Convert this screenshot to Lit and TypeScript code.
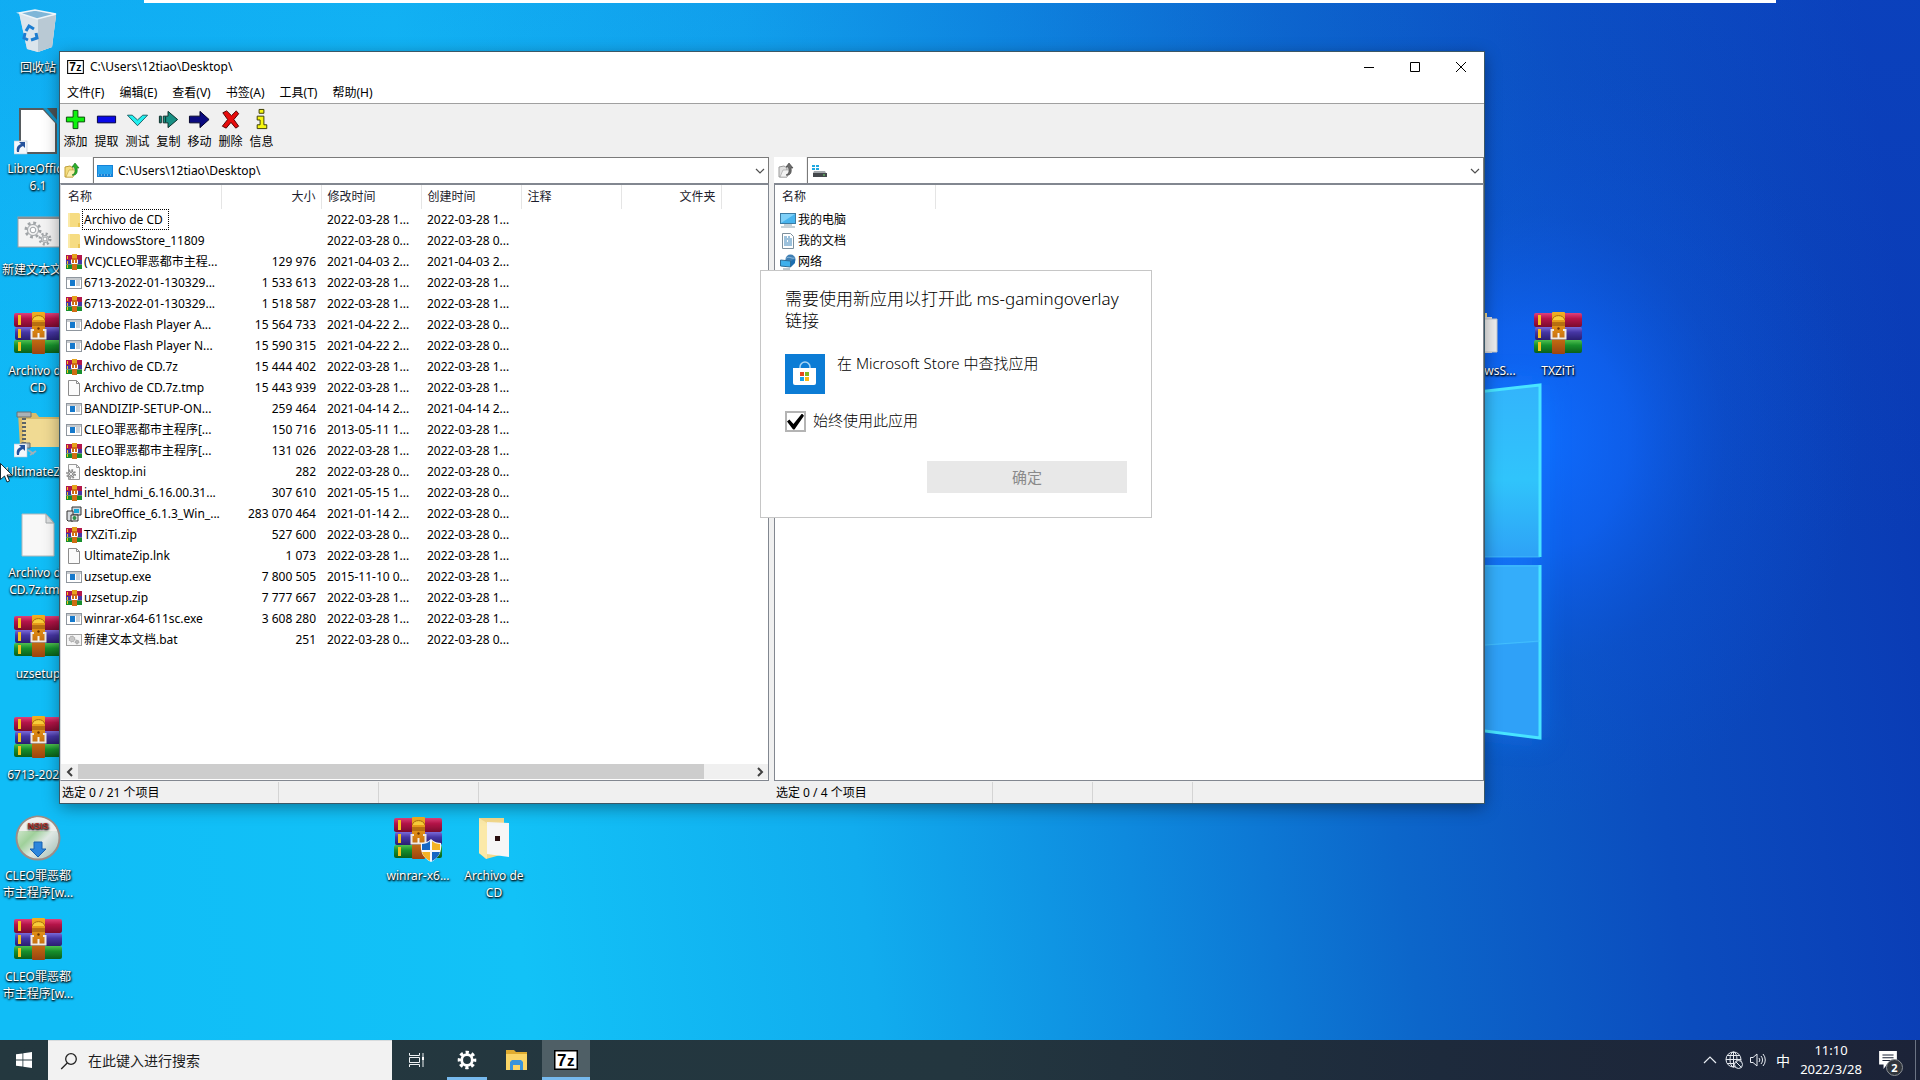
import { LitElement, html, svg, css, nothing } from "lit";
import { customElement, property } from "lit/decorators.js";
import { classMap } from "lit/directives/class-map.js";

type IconName =
  | "bin" | "doc" | "bat" | "rar" | "rarShield" | "zipFolder" | "page" | "nsis" | "openFolder" | "paperFolder"
  | "folder" | "rarSmall" | "exe" | "ini" | "msi" | "batSmall" | "pageSmall" | "pc" | "docs" | "network"
  | "add" | "extract" | "test" | "copy" | "move" | "delete" | "info"
  | "up" | "upGrey" | "screen" | "drive" | "sevenZip" | "store"
  | "start" | "search" | "taskView" | "gear" | "explorer" | "chevronUp" | "globe" | "speaker" | "notes"
  | "min" | "max" | "close" | "chevron" | "left" | "right" | "cursor";

const cog = (cx: number, cy: number, r: number, w: number, color: string) => svg`
  <circle cx=${cx} cy=${cy} r=${r} fill="none" stroke=${color} stroke-width=${w} stroke-dasharray="${r * 0.39} ${r * 0.395}"/>
  <circle cx=${cx} cy=${cy} r=${r - w / 2} fill="#f2f2f2" stroke=${color} stroke-width="1"/>
  <circle cx=${cx} cy=${cy} r=${r * 0.4} fill="#fff" stroke=${color} stroke-width="1"/>`;

const books = svg`
  <defs>
    <linearGradient id="r" x2="0" y2="1"><stop stop-color="#e0407a"/><stop offset=".4" stop-color="#b41448"/><stop offset="1" stop-color="#7a0b2e"/></linearGradient>
    <linearGradient id="b" x2="0" y2="1"><stop stop-color="#7a6ad8"/><stop offset=".4" stop-color="#4636a4"/><stop offset="1" stop-color="#2a1e70"/></linearGradient>
    <linearGradient id="g" x2="0" y2="1"><stop stop-color="#4fc04f"/><stop offset=".4" stop-color="#17902c"/><stop offset="1" stop-color="#0a5f1a"/></linearGradient>
    <linearGradient id="o" x2="0" y2="1"><stop stop-color="#f2b020"/><stop offset=".45" stop-color="#d98412"/><stop offset="1" stop-color="#9c4310"/></linearGradient>
  </defs>
  <rect x="0" y="4" width="48" height="14" rx="2" fill="url(#r)"/>
  <rect x="1" y="18" width="47" height="13" rx="2" fill="url(#b)"/>
  <rect x="0" y="31" width="48" height="13" rx="2" fill="url(#g)"/>
  <path d="M4 6h3v10h-3zM4 20h3v9h-3zM4 33h3v9h-3z" fill="#f7c21c"/>
  <rect x="18" y="3" width="13" height="42" rx="1" fill="url(#o)"/>
  <path d="M18 11a7 7 0 0 1 13 0" fill="#f8cd3a" stroke="#a86a0c" stroke-width="1"/>
  <path d="M18 14h13M18 16h13" stroke="#8c4a0a" stroke-width="1"/>
  <path d="M18 30h13" stroke="#6b3408" stroke-width="2"/>
  <path d="M20 21h-2.500v8.500h14v-8.500h-2.500" fill="none" stroke="#ece8e4" stroke-width="2"/>
  <path d="M24.500 24v5" stroke="#f5f2ee" stroke-width="2"/>
  <circle cx="24.500" cy="19.500" r="1.200" fill="#6b3408"/>`;

const shortcut = svg`<rect x="0" y="34" width="13" height="13" fill="#f4f8fc" stroke="#b8c4d0" stroke-width=".6"/>
  <path d="M3 45c-1-5 1-7 4-8l-2-2h6v6l-2-2c-3 1-4 3-4 6z" fill="#25529c"/>`;

const exeBox = svg`<rect x=".5" y="2.500" width="15" height="11" fill="#fff" stroke="#8f969e"/>
  <path d="M1 4h14" stroke="#8f969e"/><rect x="4" y="5" width="5" height="6" fill="#1579cc"/>
  <path d="M10 6h4M10 8h4M10 10h4" stroke="#9aa4ae"/>`;

const ICONS: Record<IconName, [string, unknown]> = {
  bin: ["0 0 48 48", svg`
    <path d="M5 6l30 0 7 3-4 32-14 5-11-3z" fill="#c7d9e4"/>
    <path d="M5 7l18 5 19-3-4 32-14 5-11-3z" fill="#dbe5ec"/><path d="M24 12l18-3-4 32-14 5z" fill="#b9c9d4"/>
    <path d="M5 7l16-3 21 4-19 5z" fill="#7fb6d8" stroke="#eef5f9" stroke-width="1.500"/>
    <g fill="none" stroke="#1d7dd0" stroke-width="3"><path d="M12 25l3-5 5 3"/><path d="M22 27l1 5-6 2"/><path d="M14 34l-4-2 1-5"/></g>`],
  doc: ["0 0 48 48", svg`<path d="M5 1h38v46h-38z" fill="#565b5e"/><path d="M7 3h22l12 13v29h-34z" fill="#fff"/>
    <path d="M32 1h11v13z" fill="#4c5154"/><path d="M29 1h4l10 12v4z" fill="#1495c8"/>${shortcut}`],
  bat: ["0 0 48 48", svg`<rect x="4" y="9" width="42" height="30" fill="#f3f3f3" stroke="#9a9fa3"/><path d="M4 10h42" stroke="#8c9296" stroke-width="2"/>
    ${cog(19, 22, 7, 3, "#a0a4a7")}${cog(31, 31, 5, 3, "#a0a4a7")}`],
  rar: ["0 0 48 48", books],
  rarShield: ["0 0 48 48", svg`${books}
    <path d="M37 25c3 3 7 4 10 4 1 9-2 15-10 19-8-4-11-10-10-19 3 0 7-1 10-4z" fill="#f7f9fb"/>
    <path d="M36 27v9h-8v-6c3 0 6-1 8-3zM38 38h8c-1 4-4 7-8 9z" fill="#1667c4"/>
    <path d="M38 27v9h8v-6c-3 0-6-1-8-3zM36 38h-8c1 4 4 7 8 9z" fill="#f5b324"/>`],
  zipFolder: ["0 0 48 48", svg`<path d="M4 3h18l3 4h23v30h-42z" fill="#d9bb6a"/><path d="M8 9h40v28h-38z" fill="#f0da93"/>
    <path d="M10 4v30" stroke="#5c6468" stroke-width="4" stroke-dasharray="2 2"/><path d="M3 2h14v5h-14zM7 33h9v5h-9z" fill="#aab2b6" stroke="#697175"/>${shortcut}
    <path d="M14 40l6 4M16 45l6-4" stroke="#9fb0b8" stroke-width="2"/>`],
  page: ["0 0 48 48", svg`<path d="M8 3h24l8 9v33h-32z" fill="#f8f8f8" stroke="#b4b8ba"/><path d="M32 3v9h8z" fill="#dcdfe0" stroke="#a4a8aa"/>`],
  nsis: ["0 0 48 48", svg`<defs><linearGradient id="n" x2="1" y2="1"><stop stop-color="#f4f6f2"/><stop offset=".4" stop-color="#9fd09a"/><stop offset=".6" stop-color="#dfe8e4"/><stop offset="1" stop-color="#9ab8ae"/></linearGradient></defs>
    <circle cx="24" cy="24" r="21.500" fill="url(#n)" stroke="#9b8d88" stroke-width="2"/><path d="M5 17a20 20 0 0 1 38 0z" fill="#efefec"/>
    <text x="24" y="15" text-anchor="middle" font-family="Liberation Sans" font-size="9" font-weight="bold" fill="#b03028">NSIS</text>
    <path d="M20 28h8v7h4l-8 8-8-8h4z" fill="#2b86dd" stroke="#1660ae"/>`],
  openFolder: ["0 0 48 48", svg`<path d="M9 4h25v36l-18 5-7-6z" fill="#f3d98c"/><path d="M17 8l22 1v34l-22-3z" fill="#f6f6f6"/><path d="M9 4l8 5v36l-8-6z" fill="#fbe9a8"/>
    <rect x="25" y="22" width="5" height="5" fill="#2a1010"/>`],
  paperFolder: ["0 0 48 48", svg`<path d="M9 4h20v36h-20z" fill="#f3d98c"/><path d="M16 8h18v36h-18z" fill="#dcdcdc"/><path d="M24 10h15v33h-15z" fill="#f0f0f0" stroke="#c8c8c8"/>`],
  folder: ["0 0 16 16", svg`<path d="M2 1h11l1 1v13h-12z" fill="#f6dc82"/><path d="M2 1h2v14h-2z" fill="#fbeaa8"/><path d="M12 11h2v4h-2z" fill="#eac452"/>`],
  rarSmall: ["0 0 16 16", svg`<path d="M0 1h16v5H0z" fill="#b3174b"/><path d="M0 6h16v4.500H0z" fill="#4636a4"/><path d="M0 10.500h16V15H0z" fill="#178f2d"/>
    <path d="M1 2h1v3h-1zM1 7h1v3h-1zM1 11h1v3h-1z" fill="#f7c21c"/><path d="M6 0h5v16h-5z" fill="#cf6d14"/><path d="M6 0h5v4h-5z" fill="#e6a11c"/>
    <path d="M5.500 5.500v4h6v-4M8.500 6v3" fill="none" stroke="#fff"/>`],
  exe: ["0 0 16 16", exeBox],
  ini: ["0 0 16 16", svg`<path d="M2.500.5h8l3 3v12h-11z" fill="#fbfbfb" stroke="#9a9a9a"/><path d="M10.500.5v3h3" fill="none" stroke="#9a9a9a"/>${cog(5, 10, 4, 2, "#8b8b8b")}`],
  msi: ["0 0 16 16", svg`<path d="M6 1h9v8h-9z" fill="#cfd6dc" stroke="#333"/><path d="M8 3h5v4h-5z" fill="#19a8d8"/><path d="M1 5h6v10h-5l-1-1z" fill="#d8dce0" stroke="#333"/>
    <path d="M5 9h7v6h-7z" fill="#e8e8e8" stroke="#333"/><circle cx="8.500" cy="12" r="2" fill="#2c8f4a"/>`],
  batSmall: ["0 0 16 16", svg`<rect x=".5" y="2.500" width="15" height="11" fill="#f6f6f6" stroke="#a0a0a0"/>${cog(6, 7, 3, 1, "#a8a8a8")}${cog(11, 10, 2, 1, "#a8a8a8")}`],
  pageSmall: ["0 0 16 16", svg`<path d="M2.500.5h8l3 3v12h-11z" fill="#fbfbfb" stroke="#8c8c8c"/><path d="M10.500.5v3h3" fill="none" stroke="#8c8c8c"/>`],
  pc: ["0 0 16 16", svg`<rect x=".5" y="1.500" width="15" height="10" fill="#48b4ee" stroke="#3c7ca4"/><path d="M1 2h14l-14 9z" fill="#7fd0f8"/><path d="M4 13h8M1 15h14" stroke="#8ea4b0"/>`],
  docs: ["0 0 16 16", svg`<path d="M2.500.5h8l3 3v12h-11z" fill="#fff" stroke="#7d8f9c"/><path d="M4 4h3M8 4h2M4 6h8M4 8h3M8 8h4M4 10h8M4 12h8" stroke="#3b83b8"/>`],
  network: ["0 0 16 16", svg`<circle cx="10.500" cy="5.500" r="5" fill="#3f7fb4"/><path d="M6.500 4c3-2 5 1 8 0M7 8c3-1 5 1 8 0" stroke="#9cc4e0" fill="none"/><path d="M.5 6l10 1v6l-10-1z" fill="#3fb0ec" stroke="#2d6d98"/><path d="M11 7l4-2v4l-4 4z" fill="#1d6fb0"/><path d="M3 15h7" stroke="#7c909c"/>`],
  add: ["0 0 24 24", svg`<path d="M9.500 2.500h5v7h7v5h-7v7h-5v-7h-7v-5h7z" fill="#0ef20e" stroke="#0a4a0a"/>`],
  extract: ["0 0 24 24", svg`<path d="M2.500 8.500h19v7h-19z" fill="#0808e8" stroke="#00003c"/>`],
  test: ["0 0 24 24", svg`<path d="M1.500 7.500h5l5.500 5 5.500-5h5l-10.500 11z" fill="#20f0f0" stroke="#1c6064"/>`],
  copy: ["0 0 24 24", svg`<path d="M2.500 8.500h2v7h-2zM6.500 8.500h5v-5l10 8.500-10 8.500v-5h-5z" fill="#189084" stroke="#082c28"/><path d="M9 9v6" stroke="#082c28"/>`],
  move: ["0 0 24 24", svg`<path d="M1.500 8.500h11v-5l9.500 8.500-9.500 8.500v-5h-11z" fill="#0a0a80" stroke="#000028"/>`],
  delete: ["0 0 24 24", svg`<path d="M4 5l4-2 5 5 5-5 2.500 3-5 6 5 7-3 2-5-6-5 6-4-2 5.500-7z" fill="#e80c0c" stroke="#500000"/>`],
  info: ["0 0 24 24", svg`<path d="M9.500 1.500h5v4h-5zM7.500 8.500h7v9h3v4h-10v-4h3v-5h-3z" fill="#f6f610" stroke="#383800"/>`],
  up: ["0 0 16 16", svg`<path d="M1 5l5-1 3 2v9l-8 0z" fill="#f4dc7c" stroke="#bf9f38"/><path d="M2 15l3-7h7l-3 7z" fill="#fbeeae" stroke="#bf9f38" stroke-width=".6"/><path d="M8 13c3-1 4-4 2-8h-2l3-4 4 5h-2c1 5-1 8-5 7z" fill="#2bb02b" stroke="#187018" stroke-width=".6"/>`],
  upGrey: ["0 0 16 16", svg`<path d="M1 5l5-1 3 2v9l-8 0z" fill="#e0e0e0" stroke="#9a9a9a"/><path d="M2 15l3-7h7l-3 7z" fill="#f2f2f2" stroke="#9a9a9a" stroke-width=".6"/><path d="M8 13c3-1 4-4 2-8h-2l3-4 4 5h-2c1 5-1 8-5 7z" fill="#6c6c6c" stroke="#3a3a3a" stroke-width=".6"/>`],
  screen: ["0 0 16 16", svg`<path d="M0 2h16v12H0z" fill="#1583d8"/><path d="M1 3h14v8H1z" fill="#27a4ee"/><path d="M1 12h14" stroke="#bfe0f6" stroke-dasharray="1 2"/>`],
  drive: ["0 0 16 16", svg`<path d="M1 2h3v2h-3zM5 2h3v2h-3zM1 5h3v2h-3zM5 5h3v2h-3z" fill="#20a8e0"/><path d="M3 8h11l1 2h-13z" fill="#a4a8ac"/><path d="M2 10h14v4h-14z" fill="#44484c"/><path d="M12 12h2" stroke="#6be06b"/>`],
  sevenZip: ["0 0 24 20", svg`<path d="M0 0h24v20H0z" fill="#000"/><path d="M1.500 1.500h21v17h-21z" fill="#fff"/>
    <text x="3" y="16" font-family="Liberation Sans" font-weight="bold" font-size="17">7</text><text x="13" y="16" font-family="Liberation Sans" font-weight="bold" font-size="15">z</text>`],
  store: ["0 0 40 40", svg`<path d="M0 0h40v40H0z" fill="#0c7cd5"/><path d="M15 15v-2a5 5 0 0 1 10 0v2" fill="none" stroke="#a8d4f4" stroke-width="1.500"/><path d="M8 14h23v15a2 2 0 0 1-2 2h-19a2 2 0 0 1-2-2z" fill="#fff"/>
    <path d="M15 18h4v4h-4z" fill="#e8481f"/><path d="M20 18h4v4h-4z" fill="#7fba20"/><path d="M15 23h4v4h-4z" fill="#17a3ea"/><path d="M20 23h4v4h-4z" fill="#fbb813"/>`],
  start: ["0 0 16 16", svg`<path d="M0 2.300l6.500-.9v6.200H0zM7.300 1.300l8.700-1.200v7.500H7.300zM0 8.400h6.500v6.200l-6.500-.9zM7.300 8.400h8.700v7.500l-8.700-1.200z" fill="#fff"/>`],
  search: ["0 0 18 18", svg`<circle cx="11" cy="7" r="5.300" fill="none" stroke="#222" stroke-width="1.300"/><path d="M7.200 11l-6 6" stroke="#222" stroke-width="1.300"/>`],
  taskView: ["0 0 16 16", svg`<path d="M.5 1v2.500h10V1M.5 15v-2.500h10V15M.5 5.500h10v5H.500zM14 1v14" fill="none" stroke="#eef2f4"/><path d="M13 5h2v3h-2z" fill="#fff"/>`],
  gear: ["0 0 20 20", svg`<circle cx="10" cy="10" r="7.600" fill="none" stroke="#fff" stroke-width="3.400" stroke-dasharray="3.200 2.769" stroke-dashoffset="1.600"/><circle cx="10" cy="10" r="5.300" fill="none" stroke="#fff" stroke-width="2.800"/>`],
  explorer: ["0 0 24 24", svg`<path d="M1 2h8l2 2h11v18H1z" fill="#e0ac30"/><path d="M1 6h21v16H1z" fill="#fbd566"/><path d="M5 22v-8l2-2h9l2 2v8h-3v-5h-7v5z" fill="#3994dc"/>`],
  chevronUp: ["0 0 14 14", svg`<path d="M1 10l6-6 6 6" fill="none" stroke="#e8ecf2" stroke-width="1.200"/>`],
  globe: ["0 0 18 18", svg`<g fill="none" stroke="#e8ecf2"><circle cx="8.500" cy="8.500" r="7.500"/><ellipse cx="8.500" cy="8.500" rx="3.500" ry="7.500"/><path d="M1 8.500h15M2 4.500h13M2 12.500h8M8.500 1v15"/></g><circle cx="13.500" cy="13.500" r="4" fill="#1e2a3e" stroke="#e8ecf2"/><path d="M11 11l5 5" stroke="#e8ecf2"/>`],
  speaker: ["0 0 18 18", svg`<g fill="none" stroke="#e8ecf2"><path d="M1.500 6.500h2.500l4-3.500v12l-4-3.500h-2.500z"/><path d="M10 7a3 3 0 0 1 0 4M12 5a6 6 0 0 1 0 8M14 3a9 9 0 0 1 0 12"/></g>`],
  notes: ["0 0 18 18", svg`<path d="M1 1h16v12h-9l-3 4v-4h-4z" fill="#fff"/><path d="M4 4.500h10M4 7h10M4 9.500h8" stroke="#1d2438"/>`],
  min: ["0 0 12 12", svg`<path d="M1 6.500h10" stroke="#000"/>`],
  max: ["0 0 12 12", svg`<path d="M1.500 1.500h9v9h-9z" fill="none" stroke="#000"/>`],
  close: ["0 0 12 12", svg`<path d="M1 1l10 10M11 1l-10 10" stroke="#000"/>`],
  chevron: ["0 0 10 10", svg`<path d="M1 3l4 4 4-4" fill="none" stroke="#505050" stroke-width="1.200"/>`],
  left: ["0 0 10 10", svg`<path d="M7 1l-4 4 4 4" fill="none" stroke="#404040" stroke-width="2"/>`],
  right: ["0 0 10 10", svg`<path d="M3 1l4 4-4 4" fill="none" stroke="#404040" stroke-width="2"/>`],
  cursor: ["0 0 12 20", svg`<path d="M.5.500v16l4-3.500 2.500 6 2.500-1-2.500-6h5z" fill="#fff" stroke="#000" stroke-width=".8"/>`],
};

@customElement("ui-icon")
class UiIcon extends LitElement {
  @property() name: IconName = "page";
  static styles = css`
    :host { display: block; flex: none; width: 16px; height: 16px; }
    svg { display: block; width: 100%; height: 100%; }
  `;
  render() {
    const [box, body] = ICONS[this.name];
    return html`<svg viewBox=${box} aria-hidden="true">${body}</svg>`;
  }
}

interface Shortcut { col: number; row: number; icon: IconName; lines: string[]; }
const SHORTCUTS: Shortcut[] = [
  { col: 1, row: 1, icon: "bin", lines: ["回收站"] },
  { col: 1, row: 2, icon: "doc", lines: ["LibreOffice", "6.1"] },
  { col: 1, row: 3, icon: "bat", lines: ["新建文本文档"] },
  { col: 1, row: 4, icon: "rar", lines: ["Archivo de", "CD"] },
  { col: 1, row: 5, icon: "zipFolder", lines: ["UltimateZip"] },
  { col: 1, row: 6, icon: "page", lines: ["Archivo de", "CD.7z.tmp"] },
  { col: 1, row: 7, icon: "rar", lines: ["uzsetup"] },
  { col: 1, row: 8, icon: "rar", lines: ["6713-202..."] },
  { col: 1, row: 9, icon: "nsis", lines: ["CLEO罪恶都", "市主程序[w..."] },
  { col: 1, row: 10, icon: "rar", lines: ["CLEO罪恶都", "市主程序[w..."] },
  { col: 6, row: 9, icon: "rarShield", lines: ["winrar-x6..."] },
  { col: 7, row: 9, icon: "openFolder", lines: ["Archivo de", "CD"] },
  { col: 20, row: 4, icon: "paperFolder", lines: ["WindowsS..."] },
  { col: 21, row: 4, icon: "rar", lines: ["TXZiTi"] },
];

type FileRow = [IconName, string, string, string, string];
const FILES: FileRow[] = [
  ["folder", "Archivo de CD", "", "2022-03-28 1...", "2022-03-28 1..."],
  ["folder", "WindowsStore_11809", "", "2022-03-28 0...", "2022-03-28 0..."],
  ["rarSmall", "(VC)CLEO罪恶都市主程...", "129 976", "2021-04-03 2...", "2021-04-03 2..."],
  ["exe", "6713-2022-01-130329...", "1 533 613", "2022-03-28 1...", "2022-03-28 1..."],
  ["rarSmall", "6713-2022-01-130329...", "1 518 587", "2022-03-28 1...", "2022-03-28 1..."],
  ["exe", "Adobe Flash Player A...", "15 564 733", "2021-04-22 2...", "2022-03-28 0..."],
  ["exe", "Adobe Flash Player N...", "15 590 315", "2021-04-22 2...", "2022-03-28 0..."],
  ["rarSmall", "Archivo de CD.7z", "15 444 402", "2022-03-28 1...", "2022-03-28 1..."],
  ["pageSmall", "Archivo de CD.7z.tmp", "15 443 939", "2022-03-28 1...", "2022-03-28 1..."],
  ["exe", "BANDIZIP-SETUP-ON...", "259 464", "2021-04-14 2...", "2021-04-14 2..."],
  ["exe", "CLEO罪恶都市主程序[...", "150 716", "2013-05-11 1...", "2022-03-28 1..."],
  ["rarSmall", "CLEO罪恶都市主程序[...", "131 026", "2022-03-28 1...", "2022-03-28 1..."],
  ["ini", "desktop.ini", "282", "2022-03-28 0...", "2022-03-28 0..."],
  ["rarSmall", "intel_hdmi_6.16.00.31...", "307 610", "2021-05-15 1...", "2022-03-28 0..."],
  ["msi", "LibreOffice_6.1.3_Win_...", "283 070 464", "2021-01-14 2...", "2022-03-28 0..."],
  ["rarSmall", "TXZiTi.zip", "527 600", "2022-03-28 0...", "2022-03-28 0..."],
  ["pageSmall", "UltimateZip.lnk", "1 073", "2022-03-28 1...", "2022-03-28 1..."],
  ["exe", "uzsetup.exe", "7 800 505", "2015-11-10 0...", "2022-03-28 1..."],
  ["rarSmall", "uzsetup.zip", "7 777 667", "2022-03-28 1...", "2022-03-28 1..."],
  ["exe", "winrar-x64-611sc.exe", "3 608 280", "2022-03-28 1...", "2022-03-28 1..."],
  ["batSmall", "新建文本文档.bat", "251", "2022-03-28 0...", "2022-03-28 0..."],
];
const PLACES: [IconName, string][] = [["pc", "我的电脑"], ["docs", "我的文档"], ["network", "网络"]];
const MENUS = ["文件(F)", "编辑(E)", "查看(V)", "书签(A)", "工具(T)", "帮助(H)"];
const CAPTION: [IconName, string][] = [["min", "最小化"], ["max", "最大化"], ["close", "关闭"]];
const TOOLS: [IconName, string][] = [
  ["add", "添加"], ["extract", "提取"], ["test", "测试"], ["copy", "复制"], ["move", "移动"], ["delete", "删除"], ["info", "信息"],
];

const shared = css`
  * { box-sizing: border-box; }
  button, input { font: inherit; color: inherit; margin: 0; padding: 0; border: 0; background: none; border-radius: 0; }
`;

@customElement("desktop-wallpaper")
class DesktopWallpaper extends LitElement {
  static styles = css`
    :host { display: block; }
    svg { display: block; width: 100%; height: 100%; }
  `;
  render() {
    return html`<svg viewBox="0 0 1920 1080" preserveAspectRatio="xMidYMid slice" aria-hidden="true">
      <defs>
        <linearGradient id="base" gradientUnits="userSpaceOnUse" x1="0" y1="540" x2="1900" y2="280">
          <stop offset="0" stop-color="#10bdf7"/><stop offset=".24" stop-color="#12c2f7"/><stop offset=".42" stop-color="#11acee"/>
          <stop offset=".56" stop-color="#0e8ade"/><stop offset=".7" stop-color="#0c66ca"/><stop offset=".84" stop-color="#0b4cbe"/><stop offset="1" stop-color="#0a3ab4"/>
        </linearGradient>
        <linearGradient id="top" x1="0" y1="0" x2="0" y2="1">
          <stop offset="0" stop-color="#0f5fe0" stop-opacity=".18"/><stop offset=".5" stop-color="#0f5fe0" stop-opacity="0"/>
        </linearGradient>
        <radialGradient id="glow"><stop offset="0" stop-color="#0f6dff"/><stop offset=".3" stop-color="#0f64f8" stop-opacity=".75"/><stop offset=".6" stop-color="#0d56e0" stop-opacity=".3"/><stop offset="1" stop-color="#0d50d8" stop-opacity="0"/></radialGradient>
        <linearGradient id="pane" x1="0" y1="0" x2="0" y2="1"><stop offset="0" stop-color="#33b4fb"/><stop offset=".55" stop-color="#30c4fb"/><stop offset="1" stop-color="#2ea2f6"/></linearGradient>
        <filter id="soft" x="-30%" y="-30%" width="160%" height="160%"><feGaussianBlur stdDeviation="14"/></filter>
      </defs>
      <path d="M0 0h1920v1080H0z" fill="url(#base)"/>
      <path d="M0 0h1920v1080H0z" fill="url(#top)"/>
      <ellipse cx="1530" cy="440" rx="330" ry="380" fill="url(#glow)"/>
      <path d="M1200 380l341 5v354l-341-40z" fill="#1682ff" opacity=".5" filter="url(#soft)"/>
      <path d="M1250 418l291-33v172h-291z" fill="url(#pane)"/>
      <path d="M1250 565h291v174l-291-37z" fill="#2fa1f8"/>
      <path d="M1250 565h291v77l-291 20z" fill="#36b2fb" opacity=".7"/>
      <g fill="none" stroke="#48e4ff" stroke-width="3"><path d="M1250 418l290-33v172"/><path d="M1540 565v173l-290-37"/></g>
      <path d="M1250 557h290M1250 566h290M1250 662l290-21" stroke="#48c4ff" stroke-opacity=".7"/>
    </svg>`;
  }
}

@customElement("file-manager")
class FileManager extends LitElement {
  static styles = [shared, css`
    :host { display: flex; flex-direction: column; background: #f0f0f0; outline: 1px solid #3c5866; color: #000; font-size: 12px; line-height: 20px; }
    .title { display: flex; align-items: center; height: 30px; padding-left: 7px; background: #fff; }
    .title h1 { flex: 1; margin: 0 0 0 6px; font-size: 12px; font-weight: normal; }
    .title button { display: grid; place-items: center; width: 46px; height: 30px; }
    .title .app { width: 17px; height: 14px; }
    .glyph { width: 12px; height: 12px; }
    nav { display: flex; height: 22px; align-items: center; background: #fff; border-bottom: 1px solid #a0a0a0; }
    nav button { padding: 0 8px 0 7px; white-space: nowrap; }
    .tools { display: flex; height: 53px; }
    .tools button { display: flex; flex-direction: column; align-items: center; width: 31px; padding-top: 4px; }
    .tools ui-icon { width: 23px; height: 23px; margin-bottom: 1px; }
    .panels { flex: 1; min-height: 0; display: grid; grid-template-columns: 709px 1fr; gap: 5px; }
    .panel { display: flex; flex-direction: column; min-width: 0; }
    .address { display: flex; height: 26px; }
    .address .parent { display: grid; place-items: center; width: 33px; padding-right: 8px; background: #fff; border-right: 1px solid #f0f0f0; }
    .combo { flex: 1; display: flex; align-items: center; gap: 5px; padding: 0 3px; background: #fff; border: 1px solid #7a7a7a; border-bottom-width: 0; }
    .combo input { flex: 1; min-width: 0; height: 24px; outline: 0; }
    .combo button { width: 10px; }
    .combo button ui-icon { width: 10px; height: 10px; }
    .list { flex: 1; min-height: 0; display: flex; flex-direction: column; justify-content: space-between; background: #fff; border: 1px solid #828790; border-top-width: 2px; }
    .first .list { border-left-color: #d4d8dc; }
    table { align-self: flex-start; border-collapse: collapse; table-layout: fixed; }
    .files { width: 660px; }
    .places { width: 160px; }
    .w160 { width: 160px; }
    .w100 { width: 100px; }
    th { height: 24px; padding: 0 6px; border-right: 1px solid #e5e5e5; font-weight: normal; text-align: left; color: #1c1c2c; }
    td { height: 21px; padding: 0 0 0 6px; white-space: nowrap; }
    .num { text-align: right; padding-right: 5px; }
    .name { display: flex; align-items: center; }
    th.lead { padding-left: 7px; }
    td.lead { padding-left: 5px; }
    .name span { padding: 0 1px; border: 1px solid transparent; line-height: 19px; }
    .name .focus { border: 1px dotted #000; padding-right: 5px; }
    .scroll { display: flex; align-items: center; height: 15px; margin-bottom: 1px; background: #f0f0f0; }
    .scroll button { display: grid; place-items: center; width: 17px; height: 15px; }
    .scroll ui-icon { width: 10px; height: 10px; }
    .track { flex: 1; height: 15px; }
    .thumb { width: 93%; height: 15px; background: #cdcdcd; }
    footer { display: grid; grid-template-columns: 219px 100px 100px 1fr; height: 22px; padding: 1px 0; line-height: 22px; }
    footer span { border-right: 1px solid #d4d4d4; padding-left: 2px; white-space: nowrap; }
    footer span:last-child { border-right: 0; }
  `];

  private status(text: string) {
    return html`<footer><span>${text}</span><span></span><span></span><span></span></footer>`;
  }

  private address(icon: IconName, up: IconName, value: string, label: string) {
    return html`<div class="address">
      <button class="parent" aria-label="上一级"><ui-icon name=${up}></ui-icon></button>
      <div class="combo"><ui-icon name=${icon}></ui-icon><input aria-label=${label} .value=${value}>
        <button aria-label="展开"><ui-icon name="chevron"></ui-icon></button></div>
    </div>`;
  }

  render() {
    return html`
      <header class="title"><ui-icon class="app" name="sevenZip"></ui-icon><h1>C:\\Users\\12tiao\\Desktop\\</h1>
        ${CAPTION.map(([icon, label]) => html`<button aria-label=${label}><ui-icon class="glyph" name=${icon}></ui-icon></button>`)}
      </header>
      <nav>${MENUS.map((m) => html`<button>${m}</button>`)}</nav>
      <div class="tools">${TOOLS.map(([icon, label]) => html`<button><ui-icon name=${icon}></ui-icon>${label}</button>`)}</div>
      <div class="panels">
        <section class="panel first">
          ${this.address("screen", "up", "C:\\Users\\12tiao\\Desktop\\", "左侧路径")}
          <div class="list">
            <table class="files">
              <colgroup><col class="w160"><col class="w100"><col class="w100"><col class="w100"><col class="w100"><col class="w100"></colgroup>
              <thead><tr><th class="lead">名称</th><th class="num">大小</th><th>修改时间</th><th>创建时间</th><th>注释</th><th class="num">文件夹</th></tr></thead>
              <tbody>${FILES.map(([icon, name, size, modified, created], i) => html`<tr>
                <td class="lead"><div class="name"><ui-icon name=${icon}></ui-icon><span class=${classMap({ focus: i === 0 })}>${name}</span></div></td>
                <td class="num">${size || nothing}</td><td>${modified}</td><td>${created}</td><td></td><td></td></tr>`)}</tbody>
            </table>
            <div class="scroll"><button aria-label="向左滚动"><ui-icon name="left"></ui-icon></button>
              <div class="track"><div class="thumb"></div></div>
              <button aria-label="向右滚动"><ui-icon name="right"></ui-icon></button></div>
          </div>
          ${this.status("选定 0 / 21 个项目")}
        </section>
        <section class="panel">
          ${this.address("drive", "upGrey", "", "右侧路径")}
          <div class="list">
            <table class="places">
              <colgroup><col class="w160"></colgroup>
              <thead><tr><th class="lead">名称</th></tr></thead>
              <tbody>${PLACES.map(([icon, name]) => html`<tr><td class="lead"><div class="name"><ui-icon name=${icon}></ui-icon><span>${name}</span></div></td></tr>`)}</tbody>
            </table>
          </div>
          ${this.status("选定 0 / 4 个项目")}
        </section>
      </div>`;
  }
}

@customElement("open-with-dialog")
class OpenWithDialog extends LitElement {
  static styles = [shared, css`
    :host { display: flex; flex-direction: column; padding: 17px 24px 24px; background: #fff; border: 1px solid #c6c6c6; color: #000; font-size: 15px; font-weight: 300; line-height: 18px; }
    h2 { margin: 0; font-size: 17px; font-weight: 300; line-height: 22px; }
    .app { display: flex; gap: 12px; margin-top: 22px; text-align: left; }
    .app ui-icon { width: 40px; height: 40px; }
    label { display: flex; gap: 7px; margin-top: 17px; }
    input { appearance: none; display: grid; place-items: center; width: 21px; height: 21px; border: 2px solid #b4b4b4; }
    input:checked::before { content: ""; width: 17px; height: 16px; background: #000; clip-path: polygon(0 50%, 14% 38%, 38% 66%, 88% 0, 100% 14%, 44% 100%, 36% 100%); }
    .ok { align-self: flex-end; width: 200px; height: 32px; margin: 29px 0 0; background: #e8e8e8; color: #8a8a8a; font-weight: 400; }
  `];
  render() {
    return html`
      <h2>需要使用新应用以打开此 ms-gamingoverlay 链接</h2>
      <button class="app"><ui-icon name="store"></ui-icon><span>在 Microsoft Store 中查找应用</span></button>
      <label><input type="checkbox" checked>始终使用此应用</label>
      <button class="ok" disabled>确定</button>`;
  }
}

@customElement("task-bar")
class TaskBar extends LitElement {
  static styles = [shared, css`
    :host { display: flex; justify-content: space-between; height: 40px; background: linear-gradient(90deg, #24383f, #23363f 50%, #1d2a3c 75%, #1c2338); color: #fff; font-size: 13px; line-height: 19px; }
    .side { display: flex; }
    .side > button { display: grid; place-items: center; width: 48px; height: 40px; }
    .search { display: flex; align-items: center; gap: 10px; width: 344px; padding-left: 12px; background: #f2f2f2; border-top: 1px solid #d8dcde; color: #222; font-size: 14px; }
    .search ui-icon { width: 18px; height: 18px; }
    .search input { flex: 1; min-width: 0; outline: 0; }
    .search input::placeholder { color: #1c1c1c; opacity: 1; }
    .apps { display: flex; }
    .apps button { display: grid; place-items: center; width: 50px; height: 40px; border-bottom: 3px solid transparent; padding-top: 3px; }
    .apps .running { width: 40px; margin: 0 5px; border-color: #76b9ed; }
    .apps .active { width: 48px; background: #4f5f66; border-color: #76b9ed; }
    .mid { width: 20px; height: 20px; }
    .big { width: 24px; height: 24px; }
    .side > .tray { width: 24px; }
    .side > .ime { width: 26px; margin-right: 3px; font-size: 14px; }
    .tray ui-icon { width: 18px; height: 18px; }
    .tray .small { width: 14px; height: 14px; }
    .side > .clock { display: block; width: 64px; text-align: center; white-space: nowrap; }
    .side > .note { position: relative; width: 52px; padding-right: 2px; }
    .badge { position: absolute; right: 12px; bottom: 4px; display: grid; place-items: center; width: 17px; height: 17px; border-radius: 50%; border: 1px solid #8c9096; background: #30353c; font-size: 11px; font-weight: bold; line-height: 15px; }
    .side > .peek { width: 5px; border-left: 1px solid #6c7484; }
  `];
  render() {
    return html`
      <div class="side">
        <button aria-label="开始"><ui-icon name="start"></ui-icon></button>
        <label class="search"><ui-icon name="search"></ui-icon><input placeholder="在此键入进行搜索"></label>
        <div class="apps">
          <button aria-label="任务视图"><ui-icon name="taskView"></ui-icon></button>
          <button class="running" aria-label="设置"><ui-icon class="mid" name="gear"></ui-icon></button>
          <button aria-label="文件资源管理器"><ui-icon class="big" name="explorer"></ui-icon></button>
          <button class="active" aria-label="7-Zip"><ui-icon class="big" name="sevenZip"></ui-icon></button>
        </div>
      </div>
      <div class="side">
        <button class="tray" aria-label="显示隐藏的图标"><ui-icon class="small" name="chevronUp"></ui-icon></button>
        <button class="tray" aria-label="网络"><ui-icon name="globe"></ui-icon></button>
        <button class="tray" aria-label="音量"><ui-icon name="speaker"></ui-icon></button>
        <button class="ime">中</button>
        <button class="clock">11:10<br>2022/3/28</button>
        <button class="note" aria-label="通知"><ui-icon class="mid" name="notes"></ui-icon><span class="badge">2</span></button>
        <button class="peek" aria-label="显示桌面"></button>
      </div>`;
  }
}

@customElement("app-root")
class AppRoot extends LitElement {
  static styles = [shared, css`
    :host { display: flex; flex-direction: column; position: relative; height: 100vh; overflow: hidden; font-family: "Noto Sans", "Noto Sans CJK SC", sans-serif; }
    desktop-wallpaper { position: absolute; inset: 0; }
    main { position: relative; flex: 1; display: grid; grid-template-columns: repeat(auto-fill, 76px); grid-auto-rows: 101px; overflow: hidden; }
    .shortcut { display: flex; flex-direction: column; align-items: center; padding-top: 6px; color: #fff; font-size: 12px; line-height: 17px; text-shadow: 1px 1px 2px #000, 0 1px 2px #000; white-space: nowrap; }
    .shortcut ui-icon { width: 48px; height: 48px; margin-bottom: 5px; }
    .preview { position: absolute; top: 0; left: 144px; right: 144px; height: 3px; background: #fff; }
    file-manager { position: absolute; inset: 52px 436px 237px 60px; box-shadow: 0 4px 16px rgba(0, 0, 0, 0.4); }
    open-with-dialog { position: absolute; left: 760px; top: 270px; width: 392px; height: 248px; }
    .cursor { position: absolute; left: 0; top: 463px; width: 12px; height: 20px; }
    task-bar { position: relative; }
  `];
  render() {
    return html`
      <desktop-wallpaper></desktop-wallpaper>
      <main>
        ${SHORTCUTS.map((s) => html`<button class="shortcut" style="grid-area:${s.row}/${s.col}">
          <ui-icon name=${s.icon}></ui-icon>${s.lines.map((l) => html`<span>${l}</span>`)}</button>`)}
        <div class="preview"></div>
        <file-manager></file-manager>
        <open-with-dialog role="dialog"></open-with-dialog>
        <ui-icon class="cursor" name="cursor"></ui-icon>
      </main>
      <task-bar></task-bar>`;
  }
}
